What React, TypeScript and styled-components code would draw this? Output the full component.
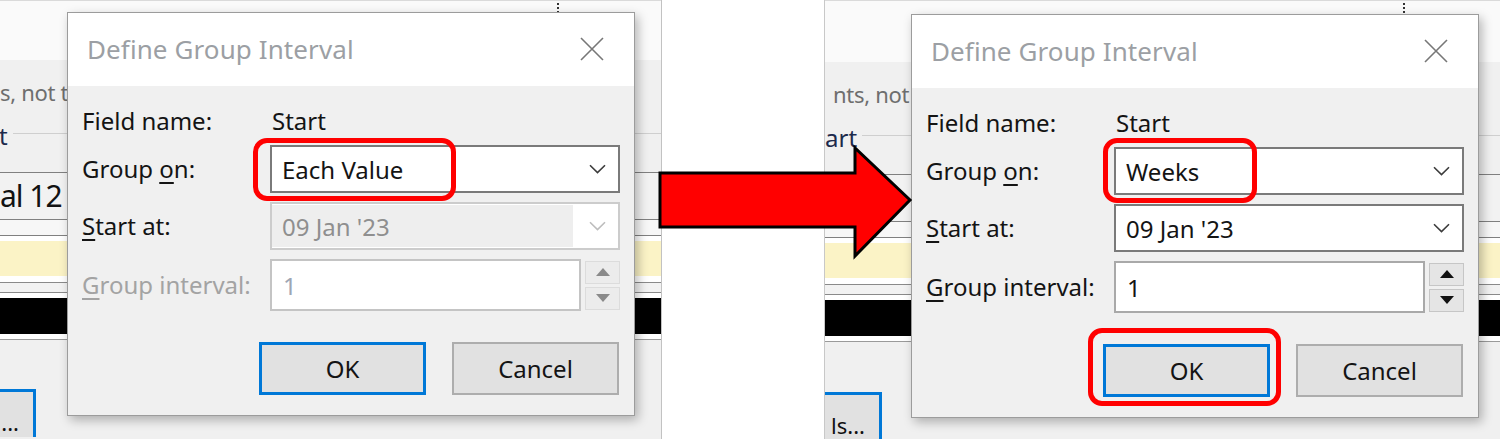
import React from "react";
import styled, { createGlobalStyle } from "styled-components";

const GlobalStyle = createGlobalStyle`
  html, body {
    margin: 0;
    padding: 0;
    background: #ffffff;
  }
  body {
    font-family: "Noto Sans", "Open Sans", sans-serif;
  }
  * {
    box-sizing: border-box;
  }
`;

const Page = styled.div`
  position: relative;
  width: 1500px;
  height: 439px;
  display: flex;
  overflow: hidden;
  background: #ffffff;
`;

const Shot = styled.div<{ $width: number; $side: "left" | "right" }>`
  position: relative;
  flex: none;
  width: ${(p) => p.$width}px;
  height: 100%;
  overflow: hidden;
  display: flex;
  flex-direction: column;
  background: #f0f0f0;
  ${(p) =>
    p.$side === "left"
      ? "border-right: 1px solid #c2c2c2;"
      : "border-left: 1px solid #c8c8c8;"}
`;

const Gap = styled.div`
  flex: 1;
  background: #ffffff;
`;

/* ---------- backdrop (the app behind the dialog) ---------- */

const TopBand = styled.div<{ $height: number; $dotsX: number }>`
  height: ${(p) => p.$height}px;
  flex: none;
  background: #fafafa;
  border-top: 1px solid #dadada;
  padding-left: ${(p) => p.$dotsX}px;
  padding-top: 2px;
`;

const Dots = styled.div`
  display: flex;
  flex-direction: column;
  gap: 2px;
  width: 2px;
  span {
    width: 2px;
    height: 2px;
    background: #333;
  }
`;

const NoteRow = styled.div<{ $indent: number }>`
  height: 73px;
  flex: none;
  padding: 17px 0 0 ${(p) => p.$indent}px;
  font-size: 22px;
  letter-spacing: -0.3px;
  line-height: 30px;
  color: #6e6e6e;
  white-space: nowrap;
`;

const LegendRow = styled.div`
  height: 39px;
  flex: none;
  display: flex;
  align-items: flex-start;
`;

const Legend = styled.span<{ $indent: number }>`
  margin: -12px 0 0 ${(p) => p.$indent}px;
  font-size: 24px;
  line-height: 30px;
  color: #1d2a4c;
  white-space: nowrap;
`;

const Rule = styled.div`
  flex: 1;
  height: 1px;
  margin-left: 5px;
  background: #cfcfcf;
`;

const BigRow = styled.div`
  height: 47px;
  flex: none;
  border-top: 1px solid #808080;
  background: #f2f2f2;
  font-size: 30px;
  letter-spacing: -1px;
  line-height: 46px;
  color: #121212;
  white-space: nowrap;
`;

const Strip = styled.div<{ $h: number; $bg: string; $top?: string; $bottom?: string }>`
  height: ${(p) => p.$h}px;
  flex: none;
  background: ${(p) => p.$bg};
  ${(p) => (p.$top ? `border-top: 1px solid ${p.$top};` : "")}
  ${(p) => (p.$bottom ? `border-bottom: 1px solid ${p.$bottom};` : "")}
`;

const Lower = styled.div<{ $pad: number }>`
  flex: 1;
  padding-top: ${(p) => p.$pad}px;
  background: #f0f0f0;
  overflow: hidden;
`;

/* the app's own button, whose left part lies outside the crop */
const AppButton = styled.div<{ $width: number }>`
  width: ${(p) => p.$width}px;
  height: 48px;
  border: 3px solid #0078d7;
  border-left: none;
  border-bottom: none;
  background: #e1e1e1;
  display: flex;
  align-items: flex-start;
  justify-content: flex-end;
  padding: 17px 14px 0 2px;
  font-size: 22px;
  line-height: 26px;
  color: #111;
  white-space: nowrap;
`;

/* ---------- dialog ---------- */

const Window = styled.div<{ $x: number; $y: number }>`
  position: absolute;
  left: ${(p) => p.$x}px;
  top: ${(p) => p.$y}px;
  width: 568px;
  height: 404px;
  background: #f0f0f0;
  border: 1px solid #9c9c9c;
  box-shadow: 3px 4px 10px rgba(0, 0, 0, 0.28);
  display: flex;
  flex-direction: column;
`;

const TitleBar = styled.div`
  height: 73px;
  flex: none;
  background: #ffffff;
  display: flex;
  align-items: center;
  justify-content: space-between;
  padding: 0 30px 2px 19px;
`;

const Title = styled.span`
  font-size: 26px;
  color: #9c9fa4;
  letter-spacing: 0.1px;
`;

const Body = styled.div`
  flex: 1;
  padding: 20px 15px 0 14px;
  display: flex;
  flex-direction: column;
`;

const Form = styled.div`
  display: grid;
  grid-template-columns: 188px 350px;
  grid-template-rows: 30px 48px 48px 52px;
  row-gap: 9px;
  align-items: center;
`;

const Label = styled.div<{ $disabled?: boolean }>`
  font-size: 24px;
  line-height: 30px;
  color: ${(p) => (p.$disabled ? "#a3a3a3" : "#141414")};
  white-space: nowrap;
  u {
    text-decoration-thickness: 2px;
    text-underline-offset: 4px;
  }
`;

const Value = styled.div`
  font-size: 24px;
  line-height: 30px;
  color: #141414;
  padding-left: 2px;
`;

const Combo = styled.div<{ $disabled?: boolean }>`
  height: 48px;
  display: flex;
  align-items: stretch;
  border: 2px solid ${(p) => (p.$disabled ? "#cccccc" : "#7a7a7a")};
  background: #ffffff;
`;

const ComboText = styled.div<{ $disabled?: boolean }>`
  flex: 1;
  display: flex;
  align-items: center;
  padding-left: 10px;
  font-size: 24px;
  color: ${(p) => (p.$disabled ? "#8f8f8f" : "#141414")};
  background: ${(p) => (p.$disabled ? "#eeeeee" : "transparent")};
  margin: ${(p) => (p.$disabled ? "1px 0 1px 0" : "0")};
`;

const ComboArrow = styled.div`
  width: 45px;
  display: flex;
  align-items: center;
  justify-content: center;
  padding-left: 4px;
`;

const SpinRow = styled.div`
  display: flex;
  gap: 4px;
  align-items: center;
  height: 52px;
`;

const SpinInput = styled.div<{ $disabled?: boolean }>`
  width: 311px;
  height: 52px;
  border: 2px solid ${(p) => (p.$disabled ? "#c4c4c4" : "#a9a9a9")};
  background: #ffffff;
  display: flex;
  align-items: center;
  padding-left: 11px;
  font-size: 24px;
  color: ${(p) => (p.$disabled ? "#9ea6b4" : "#141414")};
`;

const SpinButtons = styled.div`
  width: 35px;
  display: flex;
  flex-direction: column;
  gap: 3px;
`;

const SpinButton = styled.div<{ $disabled?: boolean }>`
  height: 23px;
  border: 1px solid ${(p) => (p.$disabled ? "#dcdcdc" : "#c6c6c6")};
  background: ${(p) => (p.$disabled ? "#ececec" : "#e5e5e5")};
  display: flex;
  align-items: center;
  justify-content: center;
`;

const Buttons = styled.div`
  margin-top: 31px;
  display: flex;
  justify-content: flex-end;
  gap: 26px;
`;

const PushButton = styled.div<{ $default?: boolean }>`
  width: 167px;
  height: 53px;
  background: #e1e1e1;
  border: ${(p) => (p.$default ? "3px solid #0078d7" : "2px solid #adadad")};
  display: flex;
  align-items: center;
  justify-content: center;
  font-size: 24px;
  color: #141414;
`;

const Mark = styled.div<{ $x: number; $y: number; $w: number; $h: number }>`
  position: absolute;
  left: ${(p) => p.$x}px;
  top: ${(p) => p.$y}px;
  width: ${(p) => p.$w}px;
  height: ${(p) => p.$h}px;
  border: 5px solid #ff0000;
  border-radius: 14px;
  pointer-events: none;
`;

const ArrowLayer = styled.svg`
  position: absolute;
  left: 655px;
  top: 140px;
`;

const Chevron = ({ color }: { color: string }) => (
  <svg width="17" height="10" viewBox="0 0 17 10">
    <path d="M1 1.2 L8.5 8.6 L16 1.2" fill="none" stroke={color} strokeWidth="1.6" />
  </svg>
);

const Tri = ({ up, color }: { up: boolean; color: string }) => (
  <svg width="14" height="8" viewBox="0 0 14 8">
    <path d={up ? "M0 8 L7 0 L14 8 Z" : "M0 0 L7 8 L14 0 Z"} fill={color} />
  </svg>
);

const CloseIcon = () => (
  <svg width="24" height="24" viewBox="0 0 24 24">
    <path d="M1 1 L23 23 M23 1 L1 23" stroke="#777" strokeWidth="1.6" fill="none" />
  </svg>
);

type DialogProps = {
  x: number;
  y: number;
  after: boolean;
};

const Dialog = ({ x, y, after }: DialogProps) => {
  const off = !after;
  return (
    <Window $x={x} $y={y}>
      <TitleBar>
        <Title>Define Group Interval</Title>
        <CloseIcon />
      </TitleBar>
      <Body>
        <Form>
          <Label>Field name:</Label>
          <Value>Start</Value>

          <Label>
            Group <u>o</u>n:
          </Label>
          <Combo>
            <ComboText>{after ? "Weeks" : "Each Value"}</ComboText>
            <ComboArrow>
              <Chevron color="#3c3c3c" />
            </ComboArrow>
          </Combo>

          <Label>
            <u>S</u>tart at:
          </Label>
          <Combo $disabled={off}>
            <ComboText $disabled={off}>09 Jan '23</ComboText>
            <ComboArrow>
              <Chevron color={off ? "#bdbdbd" : "#3c3c3c"} />
            </ComboArrow>
          </Combo>

          <Label $disabled={off}>
            <u>G</u>roup interval:
          </Label>
          <SpinRow>
            <SpinInput $disabled={off}>1</SpinInput>
            <SpinButtons>
              <SpinButton $disabled={off}>
                <Tri up color={off ? "#8a8a8a" : "#111"} />
              </SpinButton>
              <SpinButton $disabled={off}>
                <Tri up={false} color={off ? "#8a8a8a" : "#111"} />
              </SpinButton>
            </SpinButtons>
          </SpinRow>
        </Form>
        <Buttons>
          <PushButton $default>OK</PushButton>
          <PushButton>Cancel</PushButton>
        </Buttons>
      </Body>
      {after ? (
        <>
          <Mark $x={191} $y={123} $w={154} $h={65} />
          <Mark $x={176} $y={313} $w={193} $h={78} />
        </>
      ) : (
        <Mark $x={185} $y={125} $w={203} $h={63} />
      )}
    </Window>
  );
};

type BackdropProps = {
  top: number;
  dotsX: number;
  note: string;
  noteIndent: number;
  legend: string;
  legendIndent: number;
  big: string;
  button: string;
  buttonWidth: number;
  lowerPad: number;
};

const Backdrop = (p: BackdropProps) => (
  <>
    <TopBand $height={p.top} $dotsX={p.dotsX}>
      <Dots>
        <span />
        <span />
        <span />
      </Dots>
    </TopBand>
    <NoteRow $indent={p.noteIndent}>{p.note}</NoteRow>
    <LegendRow>
      <Legend $indent={p.legendIndent}>{p.legend}</Legend>
      <Rule />
    </LegendRow>
    <BigRow>{p.big}</BigRow>
    <Strip $h={17} $bg="#f7f7f7" $top="#808080" $bottom="#808080" />
    <Strip $h={5} $bg="#ffffff" />
    <Strip $h={35} $bg="#fbf3c6" />
    <Strip $h={6} $bg="#ffffff" />
    <Strip $h={11} $bg="#f2f2f2" $top="#8a8a8a" $bottom="#8a8a8a" />
    <Strip $h={5} $bg="#ffffff" />
    <Strip $h={36} $bg="#000000" />
    <Strip $h={5} $bg="#ffffff" />
    <Strip $h={1} $bg="#9a9a9a" />
    <Lower $pad={p.lowerPad}>
      <AppButton $width={p.buttonWidth}>{p.button}</AppButton>
    </Lower>
  </>
);

export default function App() {
  return (
    <>
      <GlobalStyle />
      <Page>
        <Shot $width={662} $side="left">
          <Backdrop
            top={60}
            dotsX={557}
            note="s, not the"
            noteIndent={0}
            legend="t"
            legendIndent={-1}
            big="al 12"
            button="..."
            buttonWidth={36}
            lowerPad={49}
          />
          <Dialog x={67} y={12} after={false} />
        </Shot>
        <Gap />
        <Shot $width={676} $side="right">
          <Backdrop
            top={62}
            dotsX={578}
            note="nts, not the"
            noteIndent={8}
            legend="art"
            legendIndent={0}
            big=""
            button="ls..."
            buttonWidth={57}
            lowerPad={50}
          />
          <Dialog x={86} y={14} after />
        </Shot>
        <ArrowLayer width="262" height="125" viewBox="0 0 262 125">
          <path
            d="M5 33 L200 33 L200 8 L255 60 L200 116 L200 87 L5 87 Z"
            fill="#ff0000"
            stroke="#000000"
            strokeWidth="3"
            strokeLinejoin="miter"
          />
        </ArrowLayer>
      </Page>
    </>
  );
}
